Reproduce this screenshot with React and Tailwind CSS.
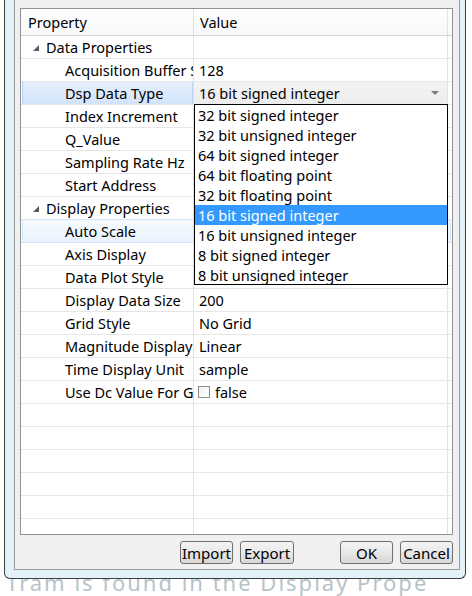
import React from "react";

const FONT = { fontFamily: '"Noto Sans", "Open Sans", sans-serif' };

const rows = [
  { cat: true, label: "Data Properties" },
  { label: "Acquisition Buffer Size", value: "128" },
  { label: "Dsp Data Type", combo: true },
  { label: "Index Increment" },
  { label: "Q_Value" },
  { label: "Sampling Rate Hz" },
  { label: "Start Address" },
  { cat: true, label: "Display Properties" },
  { label: "Auto Scale", hover: true },
  { label: "Axis Display" },
  { label: "Data Plot Style" },
  { label: "Display Data Size", value: "200" },
  { label: "Grid Style", value: "No Grid" },
  { label: "Magnitude Display", value: "Linear" },
  { label: "Time Display Unit", value: "sample" },
  { label: "Use Dc Value For Grid", check: true },
];

const options = [
  "32 bit signed integer",
  "32 bit unsigned integer",
  "64 bit signed integer",
  "64 bit floating point",
  "32 bit floating point",
  "16 bit signed integer",
  "16 bit unsigned integer",
  "8 bit signed integer",
  "8 bit unsigned integer",
];

function Tri() {
  return (
    <svg width="6" height="6" viewBox="0 0 6 6" className="shrink-0">
      <polygon points="6,0 6,6 0,6" fill="#5b5b5b" />
    </svg>
  );
}

function Row({ r }) {
  const base = "relative flex h-[23px] shrink-0 border-b border-[#e6e6e6]";
  return (
    <div className={base}>
      {r.hover && (
        <div className="absolute left-[1px] top-[-1px] right-[1px] bottom-[-1px] rounded-[2px] border border-[#d4e5f9] bg-gradient-to-b from-[#f6fafe] to-[#e9f2fd]" />
      )}
      <div className="relative flex w-[173px] shrink-0 items-center overflow-hidden whitespace-nowrap border-r border-[#e2e2e2] pt-[2px]">
        {r.combo && (
          <div className="absolute left-[1px] top-[-1px] right-0 bottom-[-1px] rounded-[2px] border border-[#b6d2f4] bg-gradient-to-b from-[#e6f0fc] to-[#d2e4fa]" />
        )}
        {r.cat ? (
          <div className="relative flex items-center pl-[12px]">
            <Tri />
            <span className="ml-[7px]">{r.label}</span>
          </div>
        ) : (
          <span className="relative pl-[44px]">{r.label}</span>
        )}
      </div>
      <div className="relative flex w-[254px] shrink-0 items-center overflow-hidden whitespace-nowrap border-r border-[#e2e2e2] pt-[2px]">
        {r.combo ? (
          <div className="absolute inset-0 top-[-1px] flex items-center justify-between bg-gradient-to-b from-[#f4f4f4] to-[#ececec] pl-[5px] pr-[8px] pt-[3px]">
            <span>16 bit signed integer</span>
            <svg width="8" height="4" viewBox="0 0 8 4" className="mt-[-2px]">
              <polygon points="0,0 8,0 4,4" fill="#7a7a7a" />
            </svg>
          </div>
        ) : r.check ? (
          <div className="flex items-center pl-[4px]">
            <div className="mt-[-2px] h-[12px] w-[12px] border border-[#8e8f8f] bg-gradient-to-br from-[#f0f0f0] to-white" />
            <span className="ml-[5px]">false</span>
          </div>
        ) : (
          <span className="pl-[5px]">{r.value}</span>
        )}
      </div>
      <div className="w-[5px] shrink-0" />
    </div>
  );
}

function Btn({ children, w, className = "" }) {
  return (
    <div
      className={`flex h-[23px] items-center justify-center rounded-[3px] border border-[#707070] bg-gradient-to-b from-[#f4f4f4] via-[#e8e8e8] to-[#d6d6d6] pt-[1px] text-[15px] text-black ${w} ${className}`}
    >
      {children}
    </div>
  );
}

export default function App() {
  const blanks = Array.from({ length: 7 });
  return (
    <div className="relative h-[596px] w-[472px] overflow-hidden bg-white text-[14.5px] text-black" style={FONT}>
      <div className="absolute left-[6px] top-[566px] whitespace-nowrap text-[22px] tracking-[2px] text-[#6f8797] opacity-50">
        Tram is found in the Display Prope
      </div>
      <div className="relative z-10 ml-[4px] h-[579px] w-[462px] rounded-b-[6px] border border-t-0 border-[#3f3f3f] bg-[#e3f1f8] pb-[8px] pl-[9px] pr-[5px]">
        <div className="flex h-full flex-col border border-t-0 border-[#9a9a9a] bg-[#f0f0f0] pl-[5px] pr-[5px] pt-[8px]">
          <div className="relative flex h-[527px] w-[433px] shrink-0 flex-col overflow-hidden border border-[#8e9298] bg-white">
            <div className="flex h-[27px] shrink-0 border-b border-[#d5d5d5] bg-gradient-to-b from-white to-[#f7f8f9]">
              <div className="flex w-[173px] shrink-0 items-center border-r border-[#e2e2e2] pl-[7px] pt-[2px]">Property</div>
              <div className="flex w-[254px] shrink-0 items-center border-r border-[#e2e2e2] pl-[6px] pt-[2px]">Value</div>
              <div className="w-[5px] shrink-0" />
            </div>
            {rows.map((r, i) => (
              <Row key={i} r={r} />
            ))}
            {blanks.map((_, i) => (
              <Row key={"b" + i} r={{ label: "" }} />
            ))}
            <div className="absolute left-[173px] top-[95px] h-[181px] w-[254px] border border-black bg-white">
              {options.map((o, i) => (
                <div
                  key={i}
                  className={`flex h-[20px] items-center whitespace-nowrap pl-[3px] pt-[1px] ${
                    i === 5 ? "bg-[#3399ff] text-white" : ""
                  }`}
                >
                  {o}
                </div>
              ))}
            </div>
          </div>
          <div className="mt-[6px] flex items-start">
            <Btn w="w-[53px]" className="ml-[160px]">Import</Btn>
            <Btn w="w-[54px]" className="ml-[7px]">Export</Btn>
            <Btn w="w-[53px]" className="ml-[46px]">OK</Btn>
            <Btn w="w-[53px]" className="ml-[7px]">Cancel</Btn>
          </div>
        </div>
      </div>
    </div>
  );
}
